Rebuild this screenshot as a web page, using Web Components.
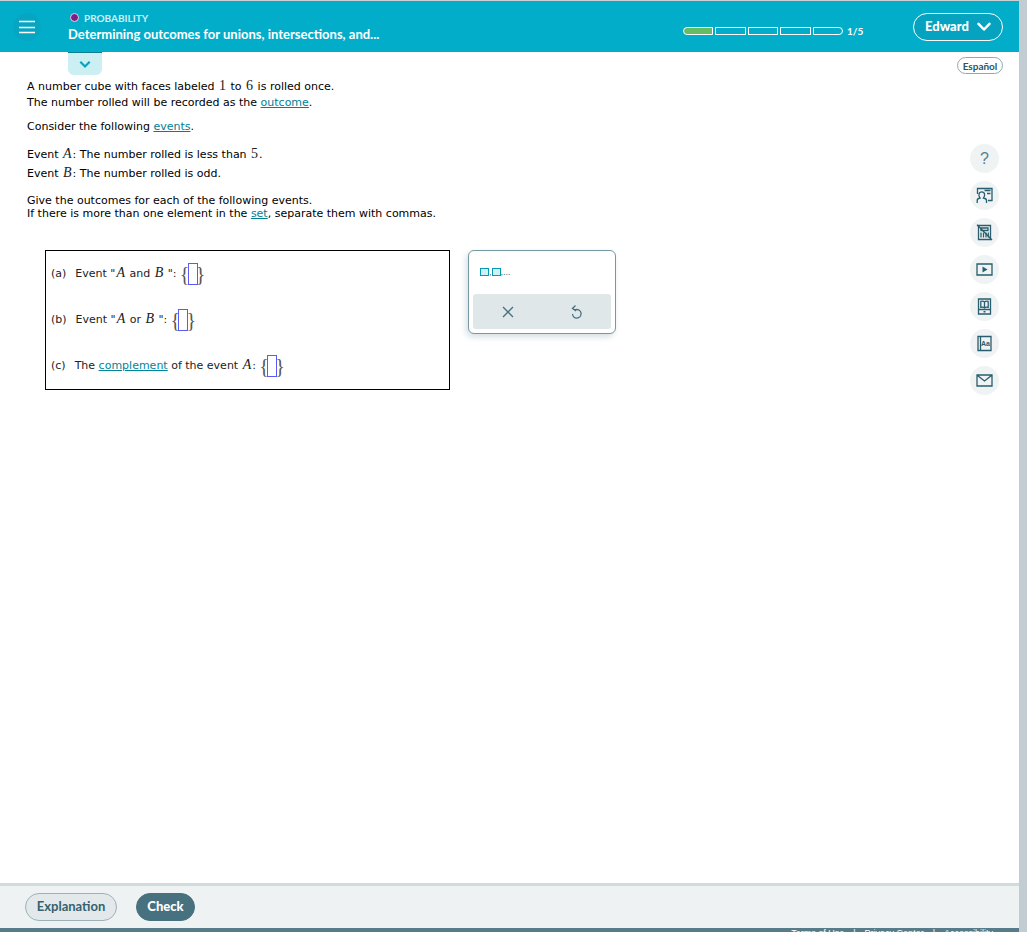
<!DOCTYPE html>
<html lang="en">
<head>
<meta charset="utf-8">
<title>Probability</title>
<style>
  body { margin: 0; height: 100vh; overflow: hidden; background: #FFFFFF; font-family: Lato, 'Liberation Sans', sans-serif; }
</style>
</head>
<body>
<lesson-page></lesson-page>

<script>
const define = (name, html) => {
  const template = document.createElement('template');
  template.innerHTML = html;
  customElements.define(name, class extends HTMLElement {
    connectedCallback() {
      if (!this.shadowRoot) {
        const root = this.attachShadow({ mode: 'open' });
        root.appendChild(template.content.cloneNode(true));
      }
    }
  });
};

define('progress-meter', `
<style>
  :host { display: flex; align-items: center; gap: 4px; color: #FFFFFF; font-size: 10px; font-weight: 700; }
  .bar { display: grid; grid-template-columns: repeat(5, 1fr); gap: 2px; width: 160px; height: 8px; }
  .step { box-sizing: border-box; border: 1px solid #FFFFFF; }
  .step:first-child { border-radius: 4px 0 0 4px; }
  .step:last-child { border-radius: 0 4px 4px 0; }
  .done { background: #64BD63; }
  .count { width: 12px; white-space: nowrap; }
</style>
<div class="bar">
  <div class="step done"></div><div class="step"></div><div class="step"></div><div class="step"></div><div class="step"></div>
</div>
<span class="count">1/5</span>
`);

define('lesson-header', `
<style>
  :host { box-sizing: border-box; display: flex; align-items: center; height: 52px; padding: 0 16px 0 13px; background: #02ADCA; border-top: 1px solid #C9D3D6; color: #FFFFFF; }
  button { font: inherit; color: inherit; cursor: pointer; }
  .menu { display: grid; place-items: center; width: 28px; height: 28px; padding: 0; border: 0; border-radius: 50%; background: #06A6C3; }
  .titles { display: flex; flex-direction: column; margin-left: 27px; padding-bottom: 2px; }
  .topic { display: flex; align-items: center; gap: 5px; padding-left: 2px; font-size: 10px; line-height: 16px; font-weight: 700; color: #CDF0F6; }
  .dot { box-sizing: border-box; width: 9px; height: 9px; border: 1px solid #E5D3EA; border-radius: 50%; background: #7B1F83; }
  h1 { margin: 0; font-size: 13px; line-height: 16px; font-weight: 700; }
  progress-meter { margin-left: auto; padding-top: 8px; }
  .user { box-sizing: border-box; display: flex; align-items: center; justify-content: center; gap: 8px; width: 90px; height: 28px; margin-left: 54px; padding: 0 0 2px; border: 1px solid #FFFFFF; border-radius: 14px; background: #06A3C0; font-size: 13px; font-weight: 900; }
  .user svg { padding-top: 3px; }
</style>
<button class="menu" aria-label="Menu">
  <svg width="16" height="14" viewBox="0 0 16 14"><path d="M0 1.5h16M0 7.5h16M0 12.5h16" stroke="#fff" stroke-width="1.3"/></svg>
</button>
<div class="titles">
  <div class="topic"><span class="dot"></span><span>PROBABILITY</span></div>
  <h1>Determining outcomes for unions, intersections, and...</h1>
</div>
<progress-meter></progress-meter>
<button class="user">Edward
  <svg width="14" height="10" viewBox="0 0 14 10"><path d="M1.5 1.8L7 7.5l5.500-5.700" fill="none" stroke="#fff" stroke-width="2.500" stroke-linecap="round" stroke-linejoin="round"/></svg>
</button>
`);

define('lesson-subbar', `
<style>
  :host { display: flex; justify-content: space-between; align-items: flex-start; height: 27px; padding: 0 16px 0 68px; }
  button { box-sizing: border-box; padding: 0; font: inherit; cursor: pointer; }
  .toggle { display: grid; place-items: center; width: 34px; height: 23px; border: 0; border-top: 1px solid #0E7F92; border-radius: 0 0 6px 6px; background: #CCEFF4; }
  .lang { width: 46px; height: 17px; margin-top: 5px; border: 1px solid #8FA9B2; border-radius: 9px; background: #FFFFFF; color: #2C5564; font-size: 10px; font-weight: 700; line-height: 14px; }
</style>
<button class="toggle" aria-label="Show details">
  <svg width="12" height="9" viewBox="0 0 12 9"><path d="M1.300 1.800L6 6.500l4.700-4.700" fill="none" stroke="#04A5C1" stroke-width="2.200"/></svg>
</button>
<button class="lang">Español</button>
`);

define('math-text', `<style>
  :host { padding: 0 1px; font-family: 'Liberation Serif', serif; font-size: 14px; line-height: 1px; color: #222222; }
  :host([var]) { font-style: italic; }
</style><slot></slot>`);

define('set-input', `
<style>
  :host { display: inline-flex; align-items: center; height: 22px; font-family: 'Liberation Serif', serif; font-size: 20px; line-height: 20px; color: #555555; }
  span { width: 6px; display: flex; justify-content: center; }
  input { position: relative; z-index: 1; box-sizing: border-box; width: 10px; height: 22px; padding: 0; border: 1px solid #5A5AF5; border-radius: 0; background: #FFFFFF; font: inherit; font-size: 14px; outline: 0; }
</style>
<span>{</span><input type="text" aria-label="Elements of the set"><span>}</span>
`);

define('problem-text', `
<style>
  :host { display: block; font-size: 11px; color: #000000; }
  p { margin: 0; line-height: 16px; }
  p + p { margin-top: 8px; }
  p.events { margin-top: 10px; line-height: 19px; }
  p.task { margin-top: 11px; line-height: 13px; }
  a { color: #007E94; }
</style>
<p>A number cube with faces labeled <math-text>1</math-text> to <math-text>6</math-text> is rolled once.<br>
The number rolled will be recorded as the <a href="#outcome">outcome</a>.</p>
<p>Consider the following <a href="#events">events</a>.</p>
<p class="events">Event <math-text var>A</math-text>: The number rolled is less than <math-text>5</math-text>.<br>
Event <math-text var>B</math-text>: The number rolled is odd.</p>
<p class="task">Give the outcomes for each of the following events.<br>
If there is more than one element in the <a href="#set">set</a>, separate them with commas.</p>
`);

define('answer-sheet', `
<style>
  :host { box-sizing: border-box; display: grid; grid-template-rows: repeat(3, 1fr); width: 405px; height: 140px; padding: 0 5px; border: 1px solid #000000; color: #222222; font-size: 11px; }
  .row { display: flex; align-items: center; padding-bottom: 1px; }
  .label { margin-right: 9px; }
  set-input { margin-left: 5px; }
  a { color: #00869A; }
</style>
<div class="row"><span class="label">(a)</span><span>Event "<math-text var>A</math-text> and <math-text var>B</math-text> ":</span><set-input></set-input></div>
<div class="row"><span class="label">(b)</span><span>Event "<math-text var>A</math-text> or <math-text var>B</math-text> ":</span><set-input></set-input></div>
<div class="row"><span class="label">(c)</span><span>The <a href="#complement">complement</a> of the event <math-text var>A</math-text>:</span><set-input></set-input></div>
`);

define('math-palette', `
<style>
  :host { box-sizing: border-box; display: flex; flex-direction: column; justify-content: space-between; width: 148px; height: 84px; padding: 4px; border: 1px solid #7598A3; border-radius: 6px; background: #FFFFFF; box-shadow: -2px 3px 6px #D5DFE3; }
  button { padding: 0; border: 0; background: none; cursor: pointer; }
  .list { display: flex; align-items: center; height: 16px; margin: 9px auto 0 7px; font-family: 'Liberation Sans', sans-serif; font-size: 9px; color: #4B6F7B; }
  .box { box-sizing: border-box; width: 9px; height: 8px; border: 1px solid #0799B3; background: #CFF0F5; }
  .actions { display: grid; grid-template-columns: 1fr 1fr; height: 35px; border-radius: 3px; background: #DFE7E9; }
  .actions button { display: grid; place-items: center; }
  svg { fill: none; stroke: #47707E; stroke-width: 1.300; }
</style>
<button class="list" aria-label="List"><span class="box"></span>,<span class="box"></span>,...</button>
<div class="actions">
  <button aria-label="Clear"><svg width="12" height="12" viewBox="0 0 12 12"><path d="M1 1l10 10M11 1L1 11"/></svg></button>
  <button aria-label="Reset"><svg width="12" height="14" viewBox="0 0 12 14"><path d="M4.500 .5L1.500 3.500l3.500 2.500M1.800 3.500C2.500 5.500 4 4.500 6 4.500a4.300 4.300 0 1 1-4.500 4.500"/></svg></button>
</div>
`);

define('tool-rail', `
<style>
  :host { display: flex; flex-direction: column; gap: 8px; }
  button { display: grid; place-items: center; width: 29px; height: 29px; padding: 0; border: 0; border-radius: 50%; background: #EFF3F4; font: 16px 'Liberation Sans', sans-serif; color: #55808D; cursor: pointer; }
  svg { width: 17px; height: 17px; fill: none; stroke: #285E6E; stroke-width: 1.300; }
  svg text { fill: #285E6E; stroke: none; font: 700 7px 'Liberation Sans', sans-serif; }
</style>
<button aria-label="Help">?</button>
<button aria-label="Ask a teacher"><svg viewBox="0 0 17 17"><path d="M1.500 7V1.500h14.500V13.500H12M8.500 3.500h6M11 6.500h3.500"/><path d="M1.200 16V13.500q0-2 2.800-2.500Q2.500 9 3 7q.5-2.200 2.800-2.200T8.500 7q.5 2-1 4Q10.500 11.500 10.500 13.500V16"/></svg></button>
<button aria-label="No calculator"><svg viewBox="0 0 17 17"><path d="M2.500 1.500h12v14h-12zM5 4h7v2.500H5zM5 8.500v5M7.500 8.500v5M10 8.500v5M12.300 8.500v5"/><path d="M1 .8l15 15.200"/></svg></button>
<button aria-label="Video"><svg viewBox="0 0 17 17"><path d="M1 3h15v11H1z"/><path d="M6.500 5.500v6l5-3z" fill="#285E6E" stroke="none"/></svg></button>
<button aria-label="Textbook"><svg viewBox="0 0 17 17"><path d="M2.500 1h12v15h-12zM2.500 11.500h12M4.800 3.300q2.500-.5 3.700.7q1.200-1.200 3.700-.7v6q-2.500-.5-3.700.5q-1.200-1-3.700-.5zM8.500 4v5.500"/><path d="M7.500 13h2v1.500h-2z" fill="#285E6E" stroke="none"/></svg></button>
<button aria-label="Dictionary"><svg viewBox="0 0 17 17"><path d="M2 1.500h13v14H2zM4.500 1.500v14"/><text x="5" y="11">Aa</text></svg></button>
<button aria-label="Message"><svg viewBox="0 0 17 17"><path d="M1 3h15v11H1zM1.500 3.500l7 5.500 7-5.500"/></svg></button>
`);

define('action-bar', `
<style>
  :host { box-sizing: border-box; display: flex; align-items: center; gap: 19px; height: 45px; padding: 0 25px; border-top: 3px solid #D2DBDC; background: #EEF2F3; }
  button { box-sizing: border-box; height: 28px; padding: 0 0 2px; border-radius: 14px; font: inherit; font-size: 13px; font-weight: 700; cursor: pointer; }
  .explain { width: 92px; border: 1px solid #9BB2BA; background: #E3E9EB; color: #35616E; }
  .check { width: 59px; border: 1px solid #47717F; background: #47717F; color: #FFFFFF; font-weight: 900; }
</style>
<button class="explain">Explanation</button>
<button class="check">Check</button>
`);

define('legal-strip', `
<style>
  :host { box-sizing: border-box; display: flex; justify-content: flex-end; align-items: flex-start; gap: 9px; height: 4px; overflow: hidden; padding: 0 26px 0 0; background: #567C89; color: #FFFFFF; font-family: 'Liberation Sans', sans-serif; font-size: 9px; line-height: 11px; }
  a { color: inherit; text-decoration: none; }
</style>
<a href="#terms">Terms of Use</a><span>|</span><a href="#privacy">Privacy Center</a><span>|</span><a href="#accessibility">Accessibility</a>
`);

define('lesson-page', `
<style>
  :host { box-sizing: border-box; display: flex; flex-direction: column; height: 100vh; border-right: 8px solid #C1CDD3; }
  main { flex: 1; display: flex; justify-content: space-between; padding: 0 20px 0 27px; }
  .problem { font-family: 'DejaVu Sans', sans-serif; }
  .work { display: flex; align-items: flex-start; gap: 18px; margin: 30px 0 0 18px; }
  tool-rail { margin-top: 65px; }
</style>
<lesson-header></lesson-header>
<lesson-subbar></lesson-subbar>
<main>
  <div class="problem">
    <problem-text></problem-text>
    <div class="work"><answer-sheet></answer-sheet><math-palette></math-palette></div>
  </div>
  <tool-rail></tool-rail>
</main>
<action-bar></action-bar>
<legal-strip></legal-strip>
`);
</script>
</body>
</html>
